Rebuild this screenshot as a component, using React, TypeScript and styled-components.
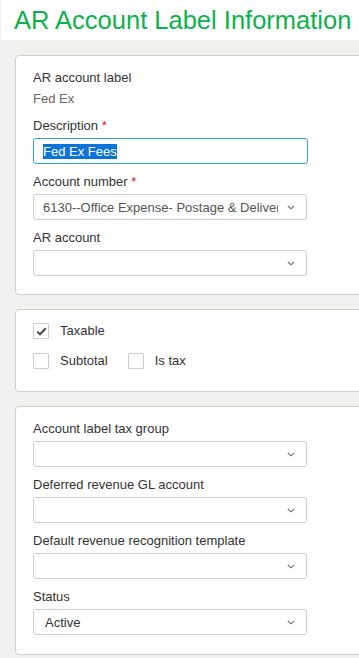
import React from "react";
import styled, { createGlobalStyle } from "styled-components";

const Global = createGlobalStyle`
  html, body { margin: 0; padding: 0; }
  body {
    background: #f1f1f0;
    font-family: "Liberation Sans", Arial, sans-serif;
    color: #333;
    overflow: hidden;
    width: 359px;
  }
`;

const Header = styled.header`
  height: 40px;
  background: #fff;
  margin-left: 1px;
  padding-left: 13px;
  display: flex;
  align-items: center;
`;

const Title = styled.h1`
  margin: 0;
  font-size: 25.5px;
  font-weight: normal;
  color: #0db14b;
  line-height: 40px;
  white-space: nowrap;
`;

const Main = styled.main`
  display: flex;
  flex-direction: column;
  gap: 14px;
  padding: 15px 0 0 15px;
`;

const Card = styled.section<{ $pt: number; $pb: number }>`
  width: 380px;
  background: #fff;
  border: 1px solid #cfcfcc;
  border-radius: 4px;
  padding: ${(p) => p.$pt}px 0 ${(p) => p.$pb}px 17px;
  display: flex;
  flex-direction: column;
`;

const Field = styled.div<{ $first?: boolean }>`
  display: flex;
  flex-direction: column;
  gap: 4px;
  margin-top: ${(p) => (p.$first ? 0 : 10)}px;
`;

const Label = styled.div`
  font-size: 13px;
  line-height: 16px;
  color: #333;
`;

const Req = styled.span`
  color: #e0201b;
`;

const StaticValue = styled.div`
  font-size: 13px;
  line-height: 16px;
  color: #666;
  margin-top: 5px;
  margin-bottom: 1px;
`;

const TextBox = styled.div`
  box-sizing: border-box;
  width: 275px;
  height: 26px;
  border: 1px solid #2ea3dc;
  border-radius: 3px;
  padding-left: 9px;
  display: flex;
  align-items: center;
  font-size: 13px;
`;

const Selected = styled.span`
  background: #0a74da;
  color: #fff;
  line-height: 15px;
`;

const SelectBox = styled.div`
  box-sizing: border-box;
  width: 274px;
  height: 26px;
  border: 1px solid #cccccc;
  border-radius: 3px;
  padding-left: 9px;
  display: flex;
  align-items: center;
  position: relative;
  font-size: 13px;
`;

const SelectText = styled.span<{ $dark?: boolean }>`
  flex: 0 0 235px;
  overflow: hidden;
  white-space: nowrap;
  color: ${(p) => (p.$dark ? "#333" : "#555")};
  padding-left: ${(p) => (p.$dark ? 2 : 0)}px;
`;

const Chevron = styled.svg`
  position: absolute;
  right: 11px;
  top: 10px;
`;

const CheckRow = styled.div<{ $first?: boolean }>`
  display: flex;
  align-items: center;
  gap: 20px;
  margin-top: ${(p) => (p.$first ? 0 : 14)}px;
`;

const CheckItem = styled.label`
  display: flex;
  align-items: center;
  gap: 11px;
  font-size: 13px;
  line-height: 16px;
  color: #333;
`;

const Box = styled.span`
  box-sizing: border-box;
  width: 16px;
  height: 16px;
  border: 1px solid #cccccc;
  border-radius: 1px;
  display: flex;
  align-items: center;
  justify-content: center;
  background: #fff;
`;

const ChevronIcon = () => (
  <Chevron width="8" height="5" viewBox="0 0 8 5">
    <path d="M0.8 0.8 L4 3.8 L7.2 0.8" fill="none" stroke="#666" strokeWidth="1.1" />
  </Chevron>
);

const Select = ({ value, dark }: { value?: string; dark?: boolean }) => (
  <SelectBox>
    <SelectText $dark={dark}>{value ?? ""}</SelectText>
    <ChevronIcon />
  </SelectBox>
);

const Check = ({ checked, label }: { checked?: boolean; label: string }) => (
  <CheckItem>
    <Box>
      {checked && (
        <svg width="11" height="9" viewBox="0 0 11 9">
          <path d="M1.2 4.6 L4 7.3 L9.8 1.3" fill="none" stroke="#4a4a4a" strokeWidth="2" />
        </svg>
      )}
    </Box>
    {label}
  </CheckItem>
);

export default function App() {
  return (
    <>
      <Global />
      <Header>
        <Title>AR Account Label Information</Title>
      </Header>
      <Main>
        <Card $pt={14} $pb={18}>
          <Label>AR account label</Label>
          <StaticValue>Fed Ex</StaticValue>
          <Field>
            <Label>
              Description <Req>*</Req>
            </Label>
            <TextBox>
              <Selected>Fed Ex Fees</Selected>
            </TextBox>
          </Field>
          <Field>
            <Label>
              Account number <Req>*</Req>
            </Label>
            <Select value="6130--Office Expense- Postage & Delivery" />
          </Field>
          <Field>
            <Label>AR account</Label>
            <Select />
          </Field>
        </Card>
        <Card $pt={13} $pb={22}>
          <CheckRow $first>
            <Check checked label="Taxable" />
          </CheckRow>
          <CheckRow>
            <Check label="Subtotal" />
            <Check label="Is tax" />
          </CheckRow>
        </Card>
        <Card $pt={14} $pb={19}>
          <Field $first>
            <Label>Account label tax group</Label>
            <Select />
          </Field>
          <Field>
            <Label>Deferred revenue GL account</Label>
            <Select />
          </Field>
          <Field>
            <Label>Default revenue recognition template</Label>
            <Select />
          </Field>
          <Field>
            <Label>Status</Label>
            <Select value="Active" dark />
          </Field>
        </Card>
      </Main>
    </>
  );
}
